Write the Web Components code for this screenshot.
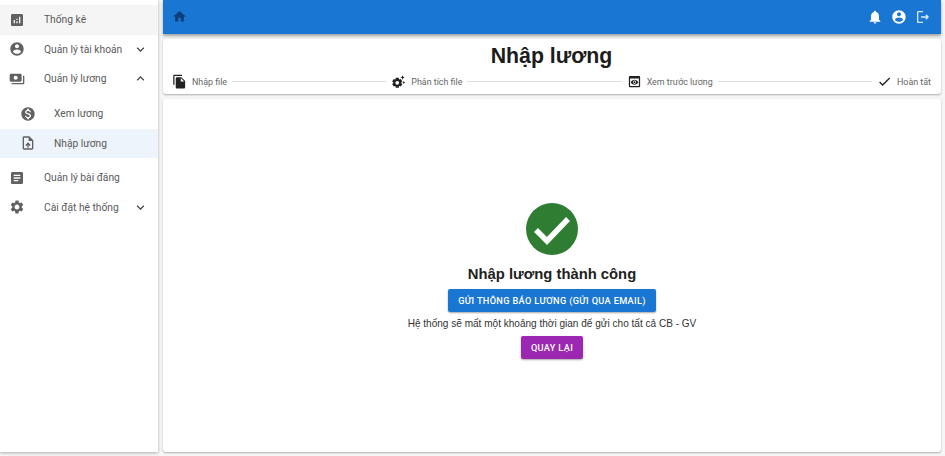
<!DOCTYPE html>
<html>
<head>
<meta charset="utf-8">
<title>Nhập lương</title>
<style>
    html, body { margin: 0; height: 100%; }
    body {
        background: #f6f6f6;
        font-family: Roboto, "Liberation Sans", sans-serif;
        overflow: hidden;
    }
</style>
</head>
<body>
<app-shell>
    <side-menu slot="menu"></side-menu>
    <top-bar slot="top"></top-bar>
    <step-header slot="top"></step-header>
    <result-panel></result-panel>
</app-shell>

<script>
const ICONS = {
    chart: '<path d="M19 3H5c-1.1 0-2 .9-2 2v14c0 1.1.9 2 2 2h14c1.1 0 2-.9 2-2V5c0-1.1-.9-2-2-2zM9 17H7v-5h2v5zm4 0h-2v-3h2v3zm0-5h-2v-2h2v2zm4 5h-2V7h2v10z"/>',
    account: '<path d="M12 2C6.48 2 2 6.48 2 12s4.48 10 10 10 10-4.48 10-10S17.52 2 12 2zm0 3c1.66 0 3 1.34 3 3s-1.34 3-3 3-3-1.34-3-3 1.34-3 3-3zm0 14.2c-2.5 0-4.71-1.28-6-3.22.03-1.99 4-3.08 6-3.08 1.99 0 5.97 1.09 6 3.08-1.29 1.94-3.5 3.22-6 3.22z"/>',
    money: '<path d="M19 14V6c0-1.1-.9-2-2-2H3c-1.1 0-2 .9-2 2v8c0 1.1.9 2 2 2h14c1.1 0 2-.9 2-2zm-9-1c-1.66 0-3-1.34-3-3s1.34-3 3-3 3 1.34 3 3-1.34 3-3 3zm13-6v11c0 1.1-.9 2-2 2H4v-2h17V7h2z"/>',
    dollar: '<path d="M12 2C6.48 2 2 6.48 2 12s4.48 10 10 10 10-4.48 10-10S17.52 2 12 2zm1.41 16.09V20h-2.67v-1.93c-1.71-.36-3.16-1.46-3.27-3.4h1.96c.1 1.05.82 1.87 2.65 1.87 1.96 0 2.4-.98 2.4-1.59 0-.83-.44-1.61-2.67-2.14-2.48-.6-4.18-1.62-4.18-3.67 0-1.72 1.39-2.84 3.11-3.21V4h2.67v1.95c1.86.45 2.79 1.86 2.85 3.39H14.3c-.05-1.11-.64-1.87-2.22-1.87-1.5 0-2.4.68-2.4 1.64 0 .84.65 1.39 2.67 1.91s4.18 1.39 4.18 3.91c-.01 1.83-1.38 2.83-3.12 3.16z"/>',
    upload: '<path d="M14 2H6c-1.1 0-1.99.9-1.99 2L4 20c0 1.1.89 2 1.99 2H18c1.1 0 2-.9 2-2V8l-6-6zm4 18H6V4h7v5h5v11zM8 15.01l1.41 1.41L11 14.84V19h2v-4.16l1.59 1.59L16 15.01 12.01 11 8 15.01z"/>',
    article: '<path d="M19 3H5c-1.1 0-2 .9-2 2v14c0 1.1.9 2 2 2h14c1.1 0 2-.9 2-2V5c0-1.1-.9-2-2-2zm-5 14H7v-2h7v2zm3-4H7v-2h10v2zm0-4H7V7h10v2z"/>',
    settings: '<path d="M19.14 12.94c.04-.3.06-.61.06-.94 0-.32-.02-.64-.07-.94l2.03-1.58c.18-.14.23-.41.12-.61l-1.92-3.32c-.12-.22-.37-.29-.59-.22l-2.39.96c-.5-.38-1.03-.7-1.62-.94l-.36-2.54c-.04-.24-.24-.41-.48-.41h-3.84c-.24 0-.43.17-.47.41l-.36 2.54c-.59.24-1.13.57-1.62.94l-2.39-.96c-.22-.08-.47 0-.59.22L2.74 8.87c-.12.21-.08.47.12.61l2.03 1.58c-.05.3-.09.63-.09.94s.02.64.07.94l-2.03 1.58c-.18.14-.23.41-.12.61l1.92 3.32c.12.22.37.29.59.22l2.39-.96c.5.38 1.03.7 1.62.94l.36 2.54c.05.24.24.41.48.41h3.84c.24 0 .44-.17.47-.41l.36-2.54c.59-.24 1.13-.56 1.62-.94l2.39.96c.22.08.47 0 .59-.22l1.92-3.32c.12-.22.07-.47-.12-.61l-2.01-1.58zM12 15.6c-1.98 0-3.6-1.62-3.6-3.6s1.62-3.6 3.6-3.6 3.6 1.62 3.6 3.6-1.62 3.6-3.6 3.6z"/>',
    down: '<path d="M16.59 8.59 12 13.17 7.41 8.59 6 10l6 6 6-6z"/>',
    up: '<path d="m12 8-6 6 1.41 1.41L12 10.83l4.59 4.58L18 14z"/>',
    home: '<path d="M10 20v-6h4v6h5v-8h3L12 3 2 12h3v8z"/>',
    bell: '<path d="M12 22c1.1 0 2-.9 2-2h-4c0 1.1.9 2 2 2zm6-6v-5c0-3.07-1.63-5.64-4.5-6.32V4c0-.83-.67-1.5-1.5-1.5s-1.5.67-1.5 1.5v.68C7.64 5.36 6 7.92 6 11v5l-2 2v1h16v-1l-2-2z"/>',
    logout: '<path d="m17 8-1.41 1.41L17.17 11H9v2h8.17l-1.58 1.58L17 16l4-4-4-4zM5 5h7V3H5c-1.1 0-2 .9-2 2v14c0 1.1.9 2 2 2h7v-2H5V5z"/>',
    files: '<path d="M16 1H4c-1.1 0-2 .9-2 2v14h2V3h12V1zm-1 4 6 6v10c0 1.1-.9 2-2 2H7.99C6.89 23 6 22.1 6 21l.01-14c0-1.1.89-2 1.99-2h7zm-1 7h5.5L14 6.5V12z"/>',
    gears: '<path d="M17.41 6.59 15 5.5l2.41-1.09L18.5 2l1.09 2.41L22 5.5l-2.41 1.09L18.5 9l-1.09-2.41zm3.87 6.13L20.5 11l-.78 1.72-1.72.78 1.72.78.78 1.72.78-1.72L23 13.5l-1.72-.78zm-5.04 1.65 1.94 1.47-2.5 4.33-2.24-.94c-.2.13-.42.26-.64.37l-.3 2.4h-5l-.3-2.41c-.22-.11-.43-.23-.64-.37l-2.24.94-2.5-4.33 1.94-1.47c-.01-.11-.01-.24-.01-.36s0-.25.01-.37l-1.94-1.47 2.5-4.33 2.24.94c.2-.13.42-.26.64-.37L7.5 6h5l.3 2.41c.22.11.43.23.64.37l2.24-.94 2.5 4.33-1.94 1.47c.01.12.01.24.01.37s0 .24-.01.36zM13 14c0-1.66-1.34-3-3-3s-3 1.34-3 3 1.34 3 3 3 3-1.34 3-3z"/>',
    preview: '<path d="M19 3H5c-1.11 0-2 .9-2 2v14c0 1.1.89 2 2 2h14c1.1 0 2-.9 2-2V5c0-1.1-.89-2-2-2zm0 16H5V7h14v12zm-5.5-6c0 .83-.67 1.5-1.5 1.5s-1.5-.67-1.5-1.5.67-1.5 1.5-1.5 1.5.67 1.5 1.5zM12 9c-2.73 0-5.06 1.66-6 4 .94 2.34 3.27 4 6 4s5.06-1.66 6-4c-.94-2.34-3.27-4-6-4zm0 6.5c-1.38 0-2.5-1.12-2.5-2.5s1.12-2.5 2.5-2.5 2.5 1.12 2.5 2.5-1.12 2.5-2.5 2.5z"/>',
    check: '<path d="M9 16.17 4.83 12l-1.42 1.41L9 19 21 7l-1.41-1.41z"/>',
};

const svgIcon = (name, size) =>
    `<svg width="${size}" height="${size}" viewBox="0 0 24 24" fill="currentColor">${ICONS[name]}</svg>`;

class AppShell extends HTMLElement {
    constructor() {
        super();
        this.attachShadow({ mode: "open" });
        this.shadowRoot.innerHTML = `
            <style>
                :host {
                    display: grid;
                    grid-template-columns: 158px 1fr;
                    column-gap: 5px;
                    height: 456px;
                    padding-right: 4px;
                    box-sizing: border-box;
                }
                .main {
                    display: flex;
                    flex-direction: column;
                    gap: 5px;
                    padding-bottom: 4px;
                    min-width: 0;
                }
            </style>
            <slot name="menu"></slot>
            <div class="main">
                <slot name="top"></slot>
                <slot></slot>
            </div>
        `;
    }
}

class MenuItem extends HTMLElement {
    constructor() {
        super();
        this.attachShadow({ mode: "open" });
    }

    connectedCallback() {
        const icon = this.getAttribute("icon");
        const arrow = this.getAttribute("arrow");
        const sub = this.hasAttribute("sub");
        this.shadowRoot.innerHTML = `
            <style>
                :host {
                    display: flex;
                    align-items: center;
                    height: 29.5px;
                    padding-left: ${sub ? "20px" : "9px"};
                    color: #616161;
                    font-size: 10.25px;
                    box-sizing: border-box;
                }
                :host([active]) { background: #f5f5f5; }
                :host([selected]) { background: #edf4fb; }
                .icono { display: flex; width: ${sub ? "34px" : "35px"}; color: #616161; }
                .texto { flex: 1; color: #5a5a5a; white-space: nowrap; }
                .flecha { display: flex; margin-right: 10px; color: #424242; }
            </style>
            <span class="icono">${svgIcon(icon, 16)}</span>
            <span class="texto"><slot></slot></span>
            ${arrow ? `<span class="flecha">${svgIcon(arrow, 15)}</span>` : ""}
        `;
    }
}

class SideMenu extends HTMLElement {
    constructor() {
        super();
        this.attachShadow({ mode: "open" });
        this.shadowRoot.innerHTML = `
            <style>
                :host {
                    display: block;
                    background: #fff;
                    box-shadow: 0 1px 3px rgba(0,0,0,0.3);
                    padding-top: 5px;
                    margin-bottom: 4px;
                }
                .sub { padding: 5.5px 0 5px; }
            </style>
            <menu-item icon="chart" active>Thống kê</menu-item>
            <menu-item icon="account" arrow="down">Quản lý tài khoản</menu-item>
            <menu-item icon="money" arrow="up">Quản lý lương</menu-item>
            <div class="sub">
                <menu-item icon="dollar" sub>Xem lương</menu-item>
                <menu-item icon="upload" sub selected>Nhập lương</menu-item>
            </div>
            <menu-item icon="article">Quản lý bài đăng</menu-item>
            <menu-item icon="settings" arrow="down">Cài đặt hệ thống</menu-item>
        `;
    }
}

class TopBar extends HTMLElement {
    constructor() {
        super();
        this.attachShadow({ mode: "open" });
        this.shadowRoot.innerHTML = `
            <style>
                :host {
                    display: flex;
                    align-items: center;
                    height: 34px;
                    background: #1976d2;
                    box-shadow: 0 2px 3px rgba(0,0,0,0.35);
                    padding: 0 10px 1px 9px;
                    box-sizing: border-box;
                    gap: 8px;
                    color: #fff;
                }
                .inicio { display: flex; color: #0d3f78; margin-right: auto; }
                span { display: flex; }
                .salir { opacity: 0.85; }
            </style>
            <span class="inicio">${svgIcon("home", 15)}</span>
            <span>${svgIcon("bell", 16)}</span>
            <span>${svgIcon("account", 16)}</span>
            <span class="salir">${svgIcon("logout", 16)}</span>
        `;
    }
}

class StepItem extends HTMLElement {
    constructor() {
        super();
        this.attachShadow({ mode: "open" });
    }

    connectedCallback() {
        this.shadowRoot.innerHTML = `
            <style>
                :host {
                    display: flex;
                    align-items: center;
                    gap: 5px;
                    color: #666;
                    font-size: 8.9px;
                    white-space: nowrap;
                }
                svg { color: #212121; display: block; }
            </style>
            ${svgIcon(this.getAttribute("icon"), 15)}
            <slot></slot>
        `;
    }
}

class StepHeader extends HTMLElement {
    constructor() {
        super();
        this.attachShadow({ mode: "open" });
        this.shadowRoot.innerHTML = `
            <style>
                :host {
                    display: block;
                    height: 55px;
                    background: #fff;
                    border-radius: 3px;
                    box-shadow: 0 1px 2px rgba(0,0,0,0.3);
                    padding: 5px 10px 0 9px;
                    box-sizing: border-box;
                }
                h1 {
                    margin: 0;
                    text-align: center;
                    font: 700 21.3px/25px "Liberation Sans", sans-serif;
                    color: #1c1c1c;
                }
                .pasos {
                    display: flex;
                    align-items: center;
                    gap: 5px;
                    margin-top: 5px;
                }
                .linea { flex: 1; height: 1px; background: #dcdcdc; }
            </style>
            <h1>Nhập lương</h1>
            <div class="pasos">
                <step-item icon="files">Nhập file</step-item>
                <div class="linea"></div>
                <step-item icon="gears">Phân tích file</step-item>
                <div class="linea"></div>
                <step-item icon="preview">Xem trước lương</step-item>
                <div class="linea"></div>
                <step-item icon="check">Hoàn tất</step-item>
            </div>
        `;
    }
}

class ActionButton extends HTMLElement {
    constructor() {
        super();
        this.attachShadow({ mode: "open" });
    }

    connectedCallback() {
        this.shadowRoot.innerHTML = `
            <style>
                :host {
                    display: inline-flex;
                    align-items: center;
                    justify-content: center;
                    height: 23px;
                    padding: 0 10px;
                    background: ${this.getAttribute("color")};
                    color: #fff;
                    border-radius: 2px;
                    font: 500 9.2px Roboto, "Liberation Sans", sans-serif;
                    letter-spacing: 0.34px;
                    white-space: nowrap;
                    box-shadow: 0 1px 2px rgba(0,0,0,0.35);
                }
            </style>
            <slot></slot>
        `;
    }
}

class ResultPanel extends HTMLElement {
    constructor() {
        super();
        this.attachShadow({ mode: "open" });
        this.shadowRoot.innerHTML = `
            <style>
                :host {
                    display: flex;
                    flex-direction: column;
                    align-items: center;
                    flex: 1;
                    height: 353px;
                    background: #fff;
                    border-radius: 3px;
                    box-shadow: 0 1px 2px rgba(0,0,0,0.3);
                    padding-top: 104px;
                    box-sizing: border-box;
                    font-family: "Liberation Sans", sans-serif;
                }
                .ok { display: block; }
                h2 {
                    margin: 10px 0 5px;
                    font-size: 14.8px;
                    line-height: 19px;
                    color: #212121;
                }
                p {
                    margin: 5px 0;
                    font-size: 10.05px;
                    line-height: 14px;
                    color: #333;
                }
            </style>
            <svg class="ok" width="52" height="52" viewBox="0 0 52 52">
                <circle cx="26" cy="26" r="26" fill="#2e7d32"/>
                <path d="M10 27l11 11 21-22" fill="none" stroke="#fff" stroke-width="5.5"/>
            </svg>
            <h2>Nhập lương thành công</h2>
            <action-button color="#1976d2">GỬI THÔNG BÁO LƯƠNG (GỬI QUA EMAIL)</action-button>
            <p>Hệ thống sẽ mất một khoảng thời gian để gửi cho tất cả CB - GV</p>
            <action-button color="#9c27b0">QUAY LẠI</action-button>
        `;
    }
}

customElements.define("app-shell", AppShell);
customElements.define("menu-item", MenuItem);
customElements.define("side-menu", SideMenu);
customElements.define("top-bar", TopBar);
customElements.define("step-item", StepItem);
customElements.define("step-header", StepHeader);
customElements.define("action-button", ActionButton);
customElements.define("result-panel", ResultPanel);
</script>
</body>
</html>
